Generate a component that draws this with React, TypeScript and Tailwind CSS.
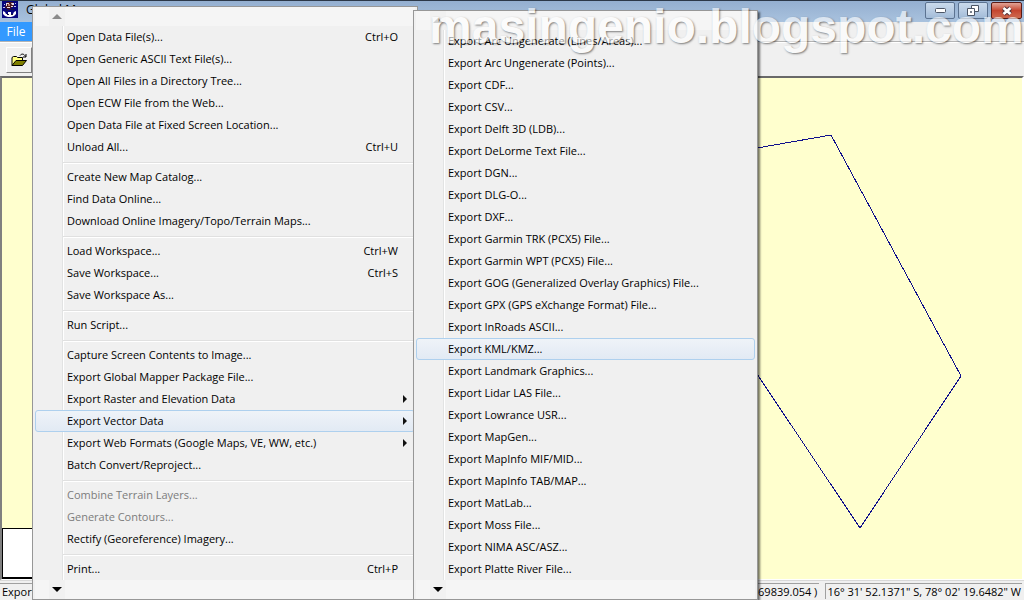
import { Fragment } from "react";

type Item = { label: string; keys?: string; sub?: boolean; off?: boolean; active?: boolean };

const fileGroups: Item[][] = [
  [
    { label: "Open Data File(s)...", keys: "Ctrl+O" },
    { label: "Open Generic ASCII Text File(s)..." },
    { label: "Open All Files in a Directory Tree..." },
    { label: "Open ECW File from the Web..." },
    { label: "Open Data File at Fixed Screen Location..." },
    { label: "Unload All...", keys: "Ctrl+U" },
  ],
  [
    { label: "Create New Map Catalog..." },
    { label: "Find Data Online..." },
    { label: "Download Online Imagery/Topo/Terrain Maps..." },
  ],
  [
    { label: "Load Workspace...", keys: "Ctrl+W" },
    { label: "Save Workspace...", keys: "Ctrl+S" },
    { label: "Save Workspace As..." },
  ],
  [{ label: "Run Script..." }],
  [
    { label: "Capture Screen Contents to Image..." },
    { label: "Export Global Mapper Package File..." },
    { label: "Export Raster and Elevation Data", sub: true },
    { label: "Export Vector Data", sub: true, active: true },
    { label: "Export Web Formats (Google Maps, VE, WW, etc.)", sub: true },
    { label: "Batch Convert/Reproject..." },
  ],
  [
    { label: "Combine Terrain Layers...", off: true },
    { label: "Generate Contours...", off: true },
    { label: "Rectify (Georeference) Imagery..." },
  ],
  [{ label: "Print...", keys: "Ctrl+P" }],
];

const exportGroups: Item[][] = [
  [
    "Export Arc Ungenerate (Lines/Areas)...",
    "Export Arc Ungenerate (Points)...",
    "Export CDF...",
    "Export CSV...",
    "Export Delft 3D (LDB)...",
    "Export DeLorme Text File...",
    "Export DGN...",
    "Export DLG-O...",
    "Export DXF...",
    "Export Garmin TRK (PCX5) File...",
    "Export Garmin WPT (PCX5) File...",
    "Export GOG (Generalized Overlay Graphics) File...",
    "Export GPX (GPS eXchange Format) File...",
    "Export InRoads ASCII...",
    "Export KML/KMZ...",
    "Export Landmark Graphics...",
    "Export Lidar LAS File...",
    "Export Lowrance USR...",
    "Export MapGen...",
    "Export MapInfo MIF/MID...",
    "Export MapInfo TAB/MAP...",
    "Export MatLab...",
    "Export Moss File...",
    "Export NIMA ASC/ASZ...",
    "Export Platte River File...",
  ].map((label) => ({ label, active: label === "Export KML/KMZ..." })),
];

function ScrollArrow({ up }: { up?: boolean }) {
  return (
    <div className="flex h-[19px] shrink-0 items-center bg-[#f5f5f5] pl-[14px]">
      <div className="flex h-full w-4 items-center justify-center bg-[#f1f1f1]">
        <svg width="10" height="5" viewBox="0 0 10 5" aria-hidden="true">
          <path d={up ? "M0 5L5 0L10 5Z" : "M0 0H10L5 5Z"} fill={up ? "#8b8b8b" : "#000"} />
        </svg>
      </div>
    </div>
  );
}

function Menu({ groups, label }: { groups: Item[][]; label: string }) {
  return (
    <div role="menu" aria-label={label} className="border border-[#979797] bg-[#f0f0f0] px-[2px]">
      <ScrollArrow up />
      <div className="bg-[linear-gradient(90deg,transparent_27px,#e2e3e3_27px,#e2e3e3_28px,#fff_28px,#fff_29px,transparent_29px)]">
        {groups.map((items, g) => (
          <Fragment key={g}>
            {g > 0 && (
              <div role="separator" className="ml-7 flex h-2 flex-col justify-center pt-px">
                <div className="h-px bg-[#e0e0e0]" />
                <div className="h-px bg-white" />
              </div>
            )}
            {items.map((item) => (
              <button
                key={item.label}
                role="menuitem"
                disabled={item.off}
                className={
                  "flex h-[22px] w-full items-center rounded-[3px] border pl-[31px] pr-[7px] text-left whitespace-nowrap " +
                  (item.active
                    ? "border-[#aed0ee] bg-linear-to-b from-[#eff3f8] to-[#e2eaf4] "
                    : "border-transparent ") +
                  (item.off ? "text-[#7c7c7c]" : "text-black")
                }
              >
                <span className="flex-1">{item.label}</span>
                {item.keys && <span className="pr-[9px]">{item.keys}</span>}
                {item.sub && (
                  <svg width="4" height="8" viewBox="0 0 4 8" aria-hidden="true">
                    <path d="M0 0L4 4L0 8Z" fill="#111" />
                  </svg>
                )}
              </button>
            ))}
          </Fragment>
        ))}
      </div>
      <ScrollArrow />
    </div>
  );
}

function TitleBar() {
  return (
    <header className="flex h-[22px] shrink-0 items-start justify-between border-t border-[#2c3848] bg-linear-to-b from-[#94afd0] to-[#a9c2de]">
      <div className="flex items-center gap-2 pl-[2px]">
        <svg width="16" height="17" viewBox="0 0 16 17" aria-hidden="true">
          <rect width="16" height="17" fill="#06067e" />
          <path d="M5 1h5l2 1v2l-1 2-2 1-1 2-3-1-2-2 1-3z" fill="#4a1820" />
          <path d="M4 2h3v1H5v2H4zM9 2h3v2h-2zM5 6h3v1H5zM9 5h2v1H9z" fill="#e8e0e4" />
          <path d="M6 3h2v2H6z" fill="#b87868" />
          <path d="M1 10l2 1 1 2h2v-2h3v2h2l1-2 2-1v3l-2 2-3 1H6l-3-1-2-2z" fill="#fff" />
          <path d="M5 13h2v1H5zM9 13h2v1H9zM4 9h2v1H4zM9 8h3v1H9z" fill="#181840" />
          <path d="M12 5h2v1h-2zM1 6h2v1H1zM13 2h1v1h-1zM2 3h1v1H2z" fill="#c8c8f0" />
        </svg>
        <span className="text-[12px]">Global Mapper</span>
      </div>
      <div className="flex gap-[3px] pt-px pr-[2px]">
        <button aria-label="Minimize" className="flex h-[17px] w-[30px] items-center justify-center rounded-[2px] border border-[#5c7391] bg-linear-to-b from-[#c9daec] via-[#b8cce3] via-50% to-[#a3bcd8]">
          <svg width="11" height="5" viewBox="0 0 11 5">
            <rect x=".5" y=".5" width="10" height="4" rx="1" fill="#fff" stroke="#4c5666" />
          </svg>
        </button>
        <button aria-label="Restore" className="flex h-[17px] w-[30px] items-center justify-center rounded-[2px] border border-[#5c7391] bg-linear-to-b from-[#c9daec] via-[#b8cce3] via-50% to-[#a3bcd8]">
          <svg width="12" height="11" viewBox="0 0 12 11" fill="#fff" stroke="#4c5666">
            <path d="M4.500.5h7v6h-7z" />
            <path d="M.5 3.500h7v7h-7z" />
            <path d="M3.500 6.500h1v1h-1z" />
          </svg>
        </button>
        <button aria-label="Close" className="flex h-[17px] w-[31px] items-center justify-center rounded-[2px] border border-[#5b1a14] bg-linear-to-b from-[#e0a397] via-[#c4452f] via-50% to-[#cf6a50]">
          <svg width="12" height="10" viewBox="0 0 12 10">
            <path d="M2.500 2L9.500 8M9.500 2L2.500 8" stroke="#4d3038" strokeWidth="4.500" />
            <path d="M2.500 2L9.500 8M9.500 2L2.500 8" stroke="#fff" strokeWidth="2.800" />
          </svg>
        </button>
      </div>
    </header>
  );
}

export default function App() {
  return (
    <div className="relative flex h-screen flex-col overflow-hidden bg-[#f0f0f0] font-['Open_Sans','Noto_Sans',sans-serif] text-[11px] leading-4 text-black">
      <TitleBar />
      <nav className="flex h-5 shrink-0 border-b border-[#b4b4b4] bg-[#f0f0f0]">
        <button className="w-8 bg-[#3399ff] text-[12px] text-white">File</button>
      </nav>
      <div className="flex h-[34px] shrink-0 items-start border-t border-white pt-1 pl-[6px]">
        <button aria-label="Open" className="flex h-[26px] w-[26px] items-center justify-center border border-t-white border-r-[#808080] border-b-[#808080] border-l-white">
          <svg width="17" height="14" viewBox="0 0 17 14" aria-hidden="true">
            <path d="M1 12.500V4.500L2.500 3.500H5.500L6.500 4.500H11.500V7" fill="#ffff80" stroke="#000" />
            <path d="M1 12.500L5 7.500H15.500L11.500 12.500Z" fill="#808000" stroke="#000" />
            <path d="M9 2.500C10.500.5 13 .5 14.500 3.500M15 1V4H12" fill="none" stroke="#000" />
          </svg>
        </button>
      </div>
      <main className="flex min-h-0 flex-1 items-end justify-between border-t-2 border-r-2 border-b border-l-2 border-t-[#696969] border-r-white border-b-white border-l-[#808080] bg-[#ffffce]">
        <div className="h-[51px] w-20 border-2 border-t border-l border-black bg-white" />
        <svg width="265" height="501" viewBox="757 78 265 501" role="img" aria-label="Map polygon">
          <path d="M757 148L831 135L961 376L860 528L757 374" fill="none" stroke="#10108c" shapeRendering="crispEdges" />
        </svg>
      </main>
      <footer className="flex h-5 shrink-0 items-end gap-[6px] border-t border-[#d8d8d8] pr-[2px] pb-px">
        <div className="flex h-4 flex-1 justify-between border-t border-[#a0a0a0] pr-[2px] pl-[2px]">
          <span>Export</span>
          <span>( 602714.217, 8169839.054 )</span>
        </div>
        <div className="h-4 border-t border-l border-[#a0a0a0] px-px whitespace-nowrap">16° 31' 52.1371" S, 78° 02' 19.6482" W</div>
      </footer>
      <div className="absolute top-[6px] left-8 w-[386px]">
        <Menu groups={fileGroups} label="File" />
      </div>
      <div className="absolute top-[10px] left-[413px] w-[345px] shadow-[2px_2px_2px_rgba(0,0,0,0.55)]">
        <Menu groups={exportGroups} label="Export Vector Data" />
      </div>
      <div className="pointer-events-none absolute top-0 left-[429px] font-['Liberation_Sans',sans-serif] text-[48px] leading-[54px] font-bold whitespace-nowrap text-white opacity-60 [text-shadow:1px_1px_2px_rgba(0,0,0,0.8)]">
        masingenio.blogspot.com
      </div>
    </div>
  );
}
